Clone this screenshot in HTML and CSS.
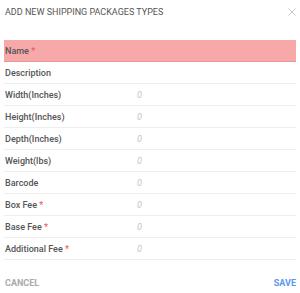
FILE: index.html
```html
<!DOCTYPE html>
<html>
<head>
<meta charset="utf-8">
<link rel="stylesheet" href="styles.css">
</head>
<body>
<div class="dialog">
  <div class="header">
    <span class="title">ADD NEW SHIPPING PACKAGES TYPES</span>
    <svg class="close" width="8" height="8" viewBox="0 0 8 8"><path d="M0.5 0.5 L7.5 7.5 M7.5 0.5 L0.5 7.5" stroke="#c8c8c8" stroke-width="1"/></svg>
  </div>
  <div class="form">
    <div class="row error"><span class="label">Name <span class="req">*</span></span><span class="value"></span></div>
    <div class="row"><span class="label">Description</span><span class="value"></span></div>
    <div class="row"><span class="label">Width(Inches)</span><span class="value">0</span></div>
    <div class="row"><span class="label">Height(Inches)</span><span class="value">0</span></div>
    <div class="row"><span class="label">Depth(Inches)</span><span class="value">0</span></div>
    <div class="row"><span class="label">Weight(lbs)</span><span class="value">0</span></div>
    <div class="row"><span class="label">Barcode</span><span class="value">0</span></div>
    <div class="row"><span class="label">Box Fee <span class="req">*</span></span><span class="value">0</span></div>
    <div class="row"><span class="label">Base Fee <span class="req">*</span></span><span class="value">0</span></div>
    <div class="row"><span class="label">Additional Fee <span class="req">*</span></span><span class="value">0</span></div>
  </div>
  <div class="footer">
    <span class="btn cancel">CANCEL</span>
    <span class="btn save">SAVE</span>
  </div>
</div>
</body>
</html>
```
FILE: styles.css
```css
html, body {
  margin: 0;
  padding: 0;
  background: #fff;
}
.dialog {
  width: 300px;
  height: 293px;
  padding: 0 4px;
  box-sizing: border-box;
  font-family: Roboto, "Liberation Sans", sans-serif;
}
.header {
  height: 24px;
  display: flex;
  align-items: center;
  justify-content: space-between;
  padding-left: 1px;
  margin-bottom: 16px;
}
.title {
  font-size: 9px;
  color: #555;
}
.form {
  display: flex;
  flex-direction: column;
}
.row {
  height: 22px;
  box-sizing: border-box;
  border-bottom: 1px solid #eeeeee;
  display: flex;
  align-items: center;
  padding-left: 1px;
}
.row.error {
  background: #f7a8a8;
  border-bottom: 1px solid #ef9393;
}
.label {
  width: 132px;
  font-size: 9px;
  font-weight: 500;
  color: #555;
}
.req {
  color: #f25a5a;
}
.value {
  font-size: 9px;
  font-style: italic;
  color: #c4c4c4;
}
.footer {
  display: flex;
  justify-content: space-between;
  align-items: center;
  margin-top: 18px;
  padding-left: 1px;
}
.btn {
  font-size: 9px;
  font-weight: 700;
}
.cancel {
  color: #aaaaaa;
}
.save {
  color: #5a97f2;
}
```
